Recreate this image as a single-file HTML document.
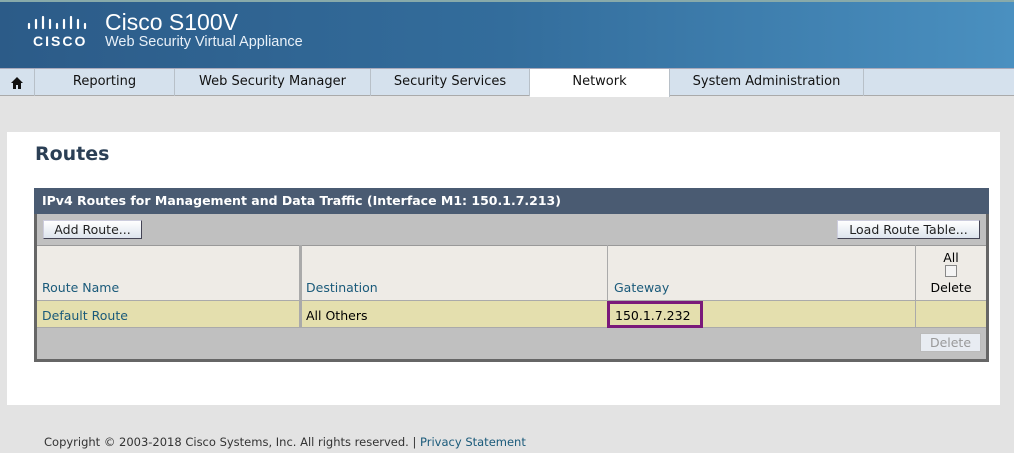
<!DOCTYPE html>
<html><head><style>
*{margin:0;padding:0;box-sizing:border-box}
body{width:1014px;height:453px;overflow:hidden;font-family:"DejaVu Sans",Verdana,sans-serif;font-size:12px;background:#e3e3e3;position:relative}
.hdr{position:absolute;left:0;top:0;width:1014px;height:68px;background:linear-gradient(90deg,#2c5b88 0%,#336d9c 50%,#4a90c0 100%);border-top:2px solid #8aa;}
.nav{position:absolute;left:0;top:68px;width:1014px;height:28px;background:#d5e1ed;border-top:1px solid #aab;border-bottom:1px solid #aaa}
.nav div{position:absolute;top:0;height:27px;line-height:25px;text-align:center;border-right:1px solid #b8c0c8;color:#111;font-size:13px}
.panel{position:absolute;left:7px;top:132px;width:993px;height:273px;background:#fff}
.abs{position:absolute}
.btn{position:absolute;height:19px;border:1px solid #445;border-top-color:#ccd;border-left-color:#ccd;background:linear-gradient(#fff,#dde4ee);font-size:12.5px;color:#222;text-align:center;line-height:17px}
a,.lnk{color:#1a5a7a}
</style></head><body>
<div class="hdr">
 <svg class="abs" style="left:27px;top:13px" width="66" height="22" viewBox="0 0 66 22">
  <g stroke="#fff" stroke-width="2.2" stroke-linecap="round">
  <line x1="2" y1="9" x2="2" y2="13"/><line x1="9" y1="5" x2="9" y2="13"/><line x1="16" y1="2" x2="16" y2="13"/><line x1="23" y1="5" x2="23" y2="13"/><line x1="30" y1="9" x2="30" y2="13"/><line x1="37" y1="5" x2="37" y2="13"/><line x1="44" y1="2" x2="44" y2="13"/><line x1="51" y1="5" x2="51" y2="13"/><line x1="58" y1="9" x2="58" y2="13"/></g>
 </svg>
 <div class="abs" style="left:33px;top:31px;color:#fff;font-weight:bold;font-size:14px;letter-spacing:2px;font-family:'Liberation Sans',sans-serif">CISCO</div>
 <div class="abs" style="left:105px;top:7px;color:#fff;font-size:23px;font-family:'Liberation Sans',sans-serif">Cisco S100V</div>
 <div class="abs" style="left:105px;top:32px;color:#e8f0f8;font-size:14.5px;font-family:'Liberation Sans',sans-serif">Web Security Virtual Appliance</div>
</div>
<div class="nav">
 <div style="left:0;width:35px"><svg width="14" height="14" viewBox="0 0 14 14" style="margin-top:7px"><path d="M7 1L1 7H3V13H6V9H8V13H11V7H13Z" fill="#111"/></svg></div>
 <div style="left:35px;width:140px">Reporting</div>
 <div style="left:175px;width:196px">Web Security Manager</div>
 <div style="left:371px;width:159px">Security Services</div>
 <div style="left:530px;width:140px;background:#fff;height:28px">Network</div>
 <div style="left:670px;width:194px">System Administration</div>
</div>
<div class="panel"></div>
<div class="abs" style="left:35px;top:143px;font-size:19px;font-weight:bold;color:#2b3f55">Routes</div>
<div class="abs" style="left:34px;top:188px;width:955px;height:174px;border:3px solid #666;background:#c0c0c0;border-top:0">
 <div class="abs" style="left:-3px;top:0;width:955px;height:26px;background:#4a5b72;color:#fff;font-weight:bold;line-height:26px;padding-left:8px;font-size:12.5px">IPv4 Routes for Management and Data Traffic (Interface M1: 150.1.7.213)</div>
 <div class="btn" style="left:6px;top:32px;width:99px">Add Route...</div>
 <div class="btn" style="left:800px;top:32px;width:143px">Load Route Table...</div>
 <div class="abs" style="left:0;top:57px;width:949px;height:56px;background:#eeebe6;border-top:1px solid #999;border-bottom:1px solid #aaa"></div>
 <div class="abs" style="left:0;top:113px;width:949px;height:27px;background:#e4dfae;border-bottom:1px solid #aaa"></div>
 <div class="abs" style="left:262px;top:57px;width:3px;height:83px;background:#aaa"></div>
 <div class="abs" style="left:570px;top:57px;width:1px;height:83px;background:#aaa"></div>
 <div class="abs" style="left:878px;top:57px;width:1px;height:83px;background:#aaa"></div>
 <div class="abs lnk" style="left:5px;top:92px;font-size:12.5px">Route Name</div>
 <div class="abs lnk" style="left:269px;top:92px;font-size:12.5px">Destination</div>
 <div class="abs lnk" style="left:577px;top:92px;font-size:12.5px">Gateway</div>
 <div class="abs" style="left:879px;top:62px;width:70px;text-align:center;font-size:12.5px;line-height:15px">All<br><span style="display:inline-block;width:12px;height:12px;border:1px solid #888;background:#f4f4f4"></span><br>Delete</div>
 <div class="abs lnk" style="left:5px;top:120px;font-size:12.5px">Default Route</div>
 <div class="abs" style="left:269px;top:120px;font-size:12.5px">All Others</div>
 <div class="abs" style="left:570px;top:113px;width:96px;height:27px;border:3px solid #7a1a7a;padding:4px 0 0 5px;font-size:12.5px">150.1.7.232</div>
 <div class="btn" style="left:883px;top:145px;width:61px;color:#999;border-color:#bbb;background:#e8ecf2">Delete</div>
</div>
<div class="abs" style="left:44px;top:435px;font-size:11.5px;color:#333">Copyright © 2003-2018 Cisco Systems, Inc. All rights reserved. | <span class="lnk">Privacy Statement</span></div>
</body></html>
